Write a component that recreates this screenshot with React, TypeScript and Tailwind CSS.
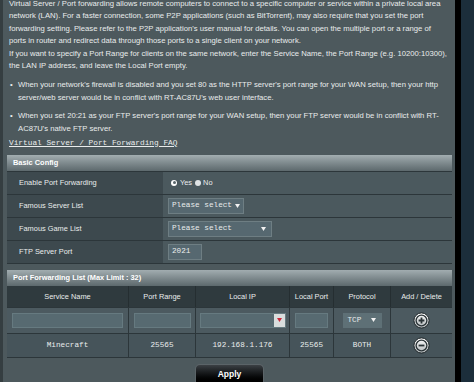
import React from "react";

const sans = { fontFamily: '"Liberation Sans", Arial, sans-serif' };
const mono = { fontFamily: '"Liberation Mono", "Courier New", monospace' };

const intro = [
  "Virtual Server / Port forwarding allows remote computers to connect to a specific computer or service within a private local area",
  "network (LAN). For a faster connection, some P2P applications (such as BitTorrent), may also require that you set the port",
  "forwarding setting. Please refer to the P2P application's user manual for details. You can open the multiple port or a range of",
  "ports in router and redirect data through those ports to a single client on your network.",
  "If you want to specify a Port Range for clients on the same network, enter the Service Name, the Port Range (e.g. 10200:10300),",
  "the LAN IP address, and leave the Local Port empty.",
];

const bullets = [
  [
    "When your network's firewall is disabled and you set 80 as the HTTP server's port range for your WAN setup, then your http",
    "server/web server would be in conflict with RT-AC87U's web user interface.",
  ],
  [
    "When you set 20:21 as your FTP server's port range for your WAN setup, then your FTP server would be in conflict with RT-",
    "AC87U's native FTP server.",
  ],
];

function Arrow({ color = "#f2f2f2" }: { color?: string }) {
  return (
    <svg width="5" height="4" viewBox="0 0 5 4">
      <path d="M0 0 H5 L2.5 4 Z" fill={color} />
    </svg>
  );
}

function RoundButton({ minus }: { minus?: boolean }) {
  return (
    <svg width="17" height="17" viewBox="0 0 17 17">
      <defs>
        <linearGradient id={minus ? "gm" : "gp"} x1="0" y1="0" x2="0" y2="1">
          <stop offset="0" stopColor="#ffffff" />
          <stop offset="1" stopColor="#aeb4b6" />
        </linearGradient>
      </defs>
      <circle cx="8.5" cy="8.5" r="7.6" fill={`url(#${minus ? "gm" : "gp"})`} stroke="#1f272a" strokeWidth="1" />
      <circle cx="8.5" cy="8.5" r="5.4" fill="none" stroke="#2a3336" strokeWidth="1.3" />
      <path d={minus ? "M5.6 8.5 H11.4" : "M5.6 8.5 H11.4 M8.5 5.6 V11.4"} stroke="#2a3336" strokeWidth="1.8" />
    </svg>
  );
}

function ConfigRow({ label, children }: { label: string; children: React.ReactNode }) {
  return (
    <div className="grid h-[23px] grid-cols-[156px_1fr] border-t border-[#2c363a]">
      <div className="flex items-center bg-[#3d494e] pl-[12px]">{label}</div>
      <div className="flex items-center bg-[#4b595e] pl-[5px]">{children}</div>
    </div>
  );
}

export default function App() {
  const cols = "grid grid-cols-[121px_67px_94px_44px_57px_62px]";
  const cell = "flex items-center justify-center border-l border-[#2c363a] first:border-l-0";

  return (
    <div className="flex h-[382px] w-[474px] overflow-hidden text-[#e9ecec]" style={sans}>
      {/* Main panel */}
      <div className="w-[455px] border-l-[3px] border-[#353e41] bg-[#4d595d] pl-[4px] pr-[3px] text-[7.4px]">
        <div className="mt-[-2px] pl-[2px] text-[7.7px] leading-[12.4px]">
          {intro.map((l) => (
            <div key={l} className="whitespace-nowrap">{l}</div>
          ))}
          <ul className="mt-[7px]">
            {bullets.map((b, i) => (
              <li key={i} className={`flex ${i ? "mt-[6px]" : ""}`}>
                <span className="w-[9px] pl-[1px]">•</span>
                <div>
                  {b.map((l) => (
                    <div key={l} className="whitespace-nowrap">{l}</div>
                  ))}
                </div>
              </li>
            ))}
          </ul>
          <div className="mt-[1.5px] text-[7.8px] underline" style={mono}>
            Virtual Server / Port Forwarding FAQ
          </div>
        </div>

        {/* Basic Config */}
        <div className="mt-[6px] w-[445px] border-b border-[#2c363a]">
          <div className="flex h-[16px] items-center bg-gradient-to-b from-[#a2adb0] to-[#5d696d] pl-[6px] font-bold text-white">
            Basic Config
          </div>
          <ConfigRow label="Enable Port Forwarding">
            <span className="mx-[3px] flex h-[6px] w-[6px] items-center justify-center rounded-full bg-white">
              <span className="h-[3px] w-[3px] rounded-full bg-[#5a676b]" />
            </span>
            <span className="mr-[3px]">Yes</span>
            <span className="mr-[2px] h-[6px] w-[6px] rounded-full bg-[#dfe3e4]" />
            <span>No</span>
          </ConfigRow>
          <ConfigRow label="Famous Server List">
            <div className="flex h-[16px] w-[76px] items-center justify-between border border-[#6e7e83] bg-[#566870] pl-[3px] pr-[3px] text-[7.7px]" style={mono}>
              <span>Please select</span>
              <Arrow />
            </div>
          </ConfigRow>
          <ConfigRow label="Famous Game List">
            <div className="flex h-[16px] w-[104px] items-center justify-between border border-[#6e7e83] bg-[#566870] pl-[3px] pr-[5px] text-[7.7px]" style={mono}>
              <span>Please select</span>
              <Arrow />
            </div>
          </ConfigRow>
          <ConfigRow label="FTP Server Port">
            <div className="flex h-[16px] w-[34px] items-center border border-[#6e7e83] bg-[#566870] pl-[3px] text-[7.7px]" style={mono}>
              2021
            </div>
          </ConfigRow>
        </div>

        {/* Port Forwarding List */}
        <div className="mt-[6px] w-[445px] border-b border-[#2c363a]">
          <div className="flex h-[16px] items-center bg-gradient-to-b from-[#a2adb0] to-[#5d696d] pl-[6px] font-bold text-white">
            Port Forwarding List (Max Limit : 32)
          </div>
          <div className={`${cols} h-[21px] bg-[#2f3a3e]`}>
            {["Service Name", "Port Range", "Local IP", "Local Port", "Protocol", "Add / Delete"].map((h) => (
              <div key={h} className={`${cell} border-[#252e31]`}>{h}</div>
            ))}
          </div>
          <div className={`${cols} h-[26px] border-t border-[#2c363a] bg-[#4c5a60]`}>
            <div className={cell}>
              <div className="h-[15px] w-[111px] border border-[#667a80] bg-[#576a71]" />
            </div>
            <div className={cell}>
              <div className="h-[15px] w-[57px] border border-[#667a80] bg-[#576a71]" />
            </div>
            <div className={cell}>
              <div className="flex h-[15px] w-[86px] justify-end border border-[#667a80] bg-[#576a71]">
                <div className="flex w-[11px] items-center justify-center bg-[#d9dddd]">
                  <Arrow color="#c8283a" />
                </div>
              </div>
            </div>
            <div className={cell}>
              <div className="h-[15px] w-[33px] border border-[#667a80] bg-[#576a71]" />
            </div>
            <div className={cell}>
              <div className="flex h-[15px] w-[39px] items-center justify-between bg-[#5e7076] pl-[5px] pr-[6px] text-[7.7px]" style={mono}>
                <span>TCP</span>
                <Arrow />
              </div>
            </div>
            <div className={cell}>
              <RoundButton />
            </div>
          </div>
          <div className={`${cols} h-[24px] border-t border-[#2c363a] bg-[#46545a] text-[7.7px]`} style={mono}>
            {["Minecraft", "25565", "192.168.1.176", "25565", "BOTH"].map((v, i) => (
              <div key={i} className={cell}>{v}</div>
            ))}
            <div className={cell}>
              <RoundButton minus />
            </div>
          </div>
        </div>

        <div className="mt-[6px] flex w-[445px] justify-center">
          <div className="flex h-[20px] w-[69px] items-start justify-center rounded-t-[5px] border border-b-0 border-[#5b6468] bg-gradient-to-b from-[#3b4044] to-black pt-[3px] text-[8.5px] font-bold text-white">
            Apply
          </div>
        </div>
      </div>
      <div className="w-[6px] bg-black" />
      <div className="flex-1 bg-[#1c2e3b]" />
    </div>
  );
}
